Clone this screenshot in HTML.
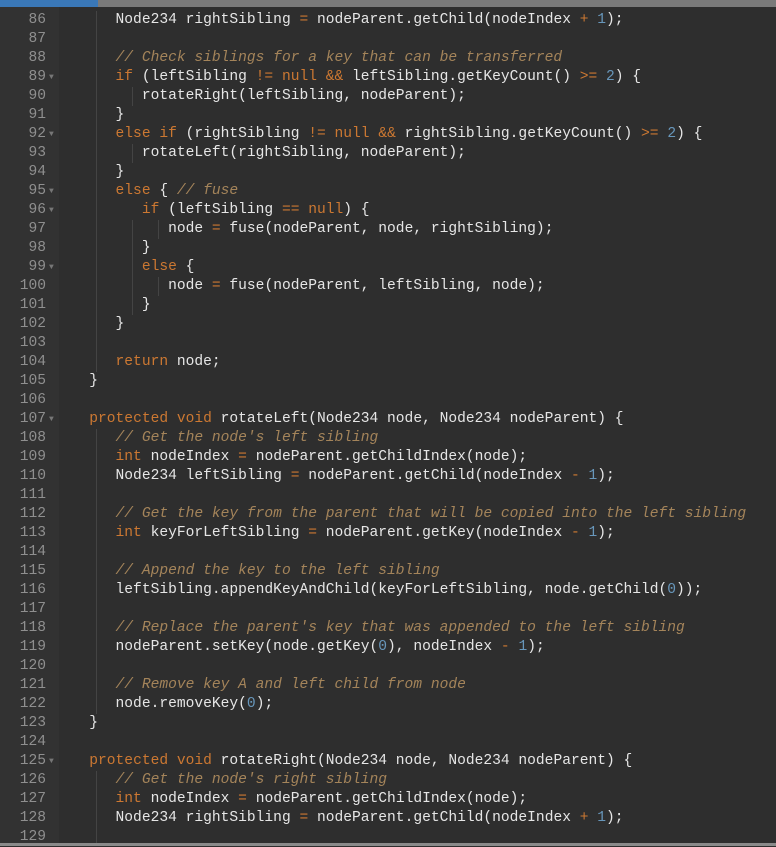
<!DOCTYPE html>
<html><head><meta charset="utf-8"><style>
html,body{margin:0;padding:0}
body{width:776px;height:846px;background:#2e2e2e;position:relative;overflow:hidden;font-family:"Liberation Mono",monospace;font-size:14.6px}
.top1{position:absolute;left:0;top:0;width:98px;height:7px;background:#3a78b8}
.top2{position:absolute;left:98px;top:0;width:678px;height:7px;background:#7a7a7a}
.bot{position:absolute;left:0;top:843px;width:776px;height:3px;background:#8a8a8a}
.gut{position:absolute;left:0;top:7px;width:59px;height:836px;background:#323232}
.g{position:absolute;width:1px;background:#444}
.ln{position:absolute;left:0;width:46px;text-align:right;color:#8f8f8f;line-height:19px;height:19px}
.cd{position:absolute;left:63px;white-space:pre;color:#e6e6e6;line-height:19px;height:19px}
.f{position:absolute;left:49px;color:#777;font-size:8px;line-height:19px}
.k{color:#cc7832}.o{color:#cc7832}.n{color:#6897bb}.c{color:#a4845a;font-style:italic}
</style></head><body>
<div class="top1"></div><div class="top2"></div>
<div class="gut"></div>
<div class="g" style="left:96px;top:11px;height:361px"></div>
<div class="g" style="left:96px;top:429px;height:285px"></div>
<div class="g" style="left:96px;top:771px;height:72px"></div>
<div class="g" style="left:132px;top:87px;height:19px"></div>
<div class="g" style="left:132px;top:144px;height:19px"></div>
<div class="g" style="left:132px;top:220px;height:95px"></div>
<div class="g" style="left:158px;top:220px;height:19px"></div>
<div class="g" style="left:158px;top:277px;height:19px"></div>
<div class="bot"></div>
<div id="c"></div>
<script>
var L=[
'      Node234 rightSibling <o>=</o> nodeParent.getChild(nodeIndex <o>+</o> <n>1</n>);',
'',
'      <c>// Check siblings for a key that can be transferred</c>',
'      <k>if</k> (leftSibling <o>!=</o> <k>null</k> <o>&amp;&amp;</o> leftSibling.getKeyCount() <o>&gt;=</o> <n>2</n>) {',
'         rotateRight(leftSibling, nodeParent);',
'      }',
'      <k>else if</k> (rightSibling <o>!=</o> <k>null</k> <o>&amp;&amp;</o> rightSibling.getKeyCount() <o>&gt;=</o> <n>2</n>) {',
'         rotateLeft(rightSibling, nodeParent);',
'      }',
'      <k>else</k> { <c>// fuse</c>',
'         <k>if</k> (leftSibling <o>==</o> <k>null</k>) {',
'            node <o>=</o> fuse(nodeParent, node, rightSibling);',
'         }',
'         <k>else</k> {',
'            node <o>=</o> fuse(nodeParent, leftSibling, node);',
'         }',
'      }',
'',
'      <k>return</k> node;',
'   }',
'',
'   <k>protected void</k> rotateLeft(Node234 node, Node234 nodeParent) {',
'      <c>// Get the node\'s left sibling</c>',
'      <k>int</k> nodeIndex <o>=</o> nodeParent.getChildIndex(node);',
'      Node234 leftSibling <o>=</o> nodeParent.getChild(nodeIndex <o>-</o> <n>1</n>);',
'',
'      <c>// Get the key from the parent that will be copied into the left sibling</c>',
'      <k>int</k> keyForLeftSibling <o>=</o> nodeParent.getKey(nodeIndex <o>-</o> <n>1</n>);',
'',
'      <c>// Append the key to the left sibling</c>',
'      leftSibling.appendKeyAndChild(keyForLeftSibling, node.getChild(<n>0</n>));',
'',
'      <c>// Replace the parent\'s key that was appended to the left sibling</c>',
'      nodeParent.setKey(node.getKey(<n>0</n>), nodeIndex <o>-</o> <n>1</n>);',
'',
'      <c>// Remove key A and left child from node</c>',
'      node.removeKey(<n>0</n>);',
'   }',
'',
'   <k>protected void</k> rotateRight(Node234 node, Node234 nodeParent) {',
'      <c>// Get the node\'s right sibling</c>',
'      <k>int</k> nodeIndex <o>=</o> nodeParent.getChildIndex(node);',
'      Node234 rightSibling <o>=</o> nodeParent.getChild(nodeIndex <o>+</o> <n>1</n>);',
''];
var folds=[89,92,95,96,99,107,125];
var h='';
for(var i=0;i<L.length;i++){var t=11+19*i,n=86+i;
h+='<div class="ln" style="top:'+t+'px">'+n+'</div>';
if(folds.indexOf(n)>=0)h+='<div class="f" style="top:'+t+'px">&#9660;</div>';
var s=L[i].replace(/<(k|o|n|c)>/g,'<span class="$1">').replace(/<\/(k|o|n|c)>/g,'</span>');
h+='<div class="cd" style="top:'+t+'px">'+s+'</div>';}
document.getElementById('c').innerHTML=h;
</script>
</body></html>
